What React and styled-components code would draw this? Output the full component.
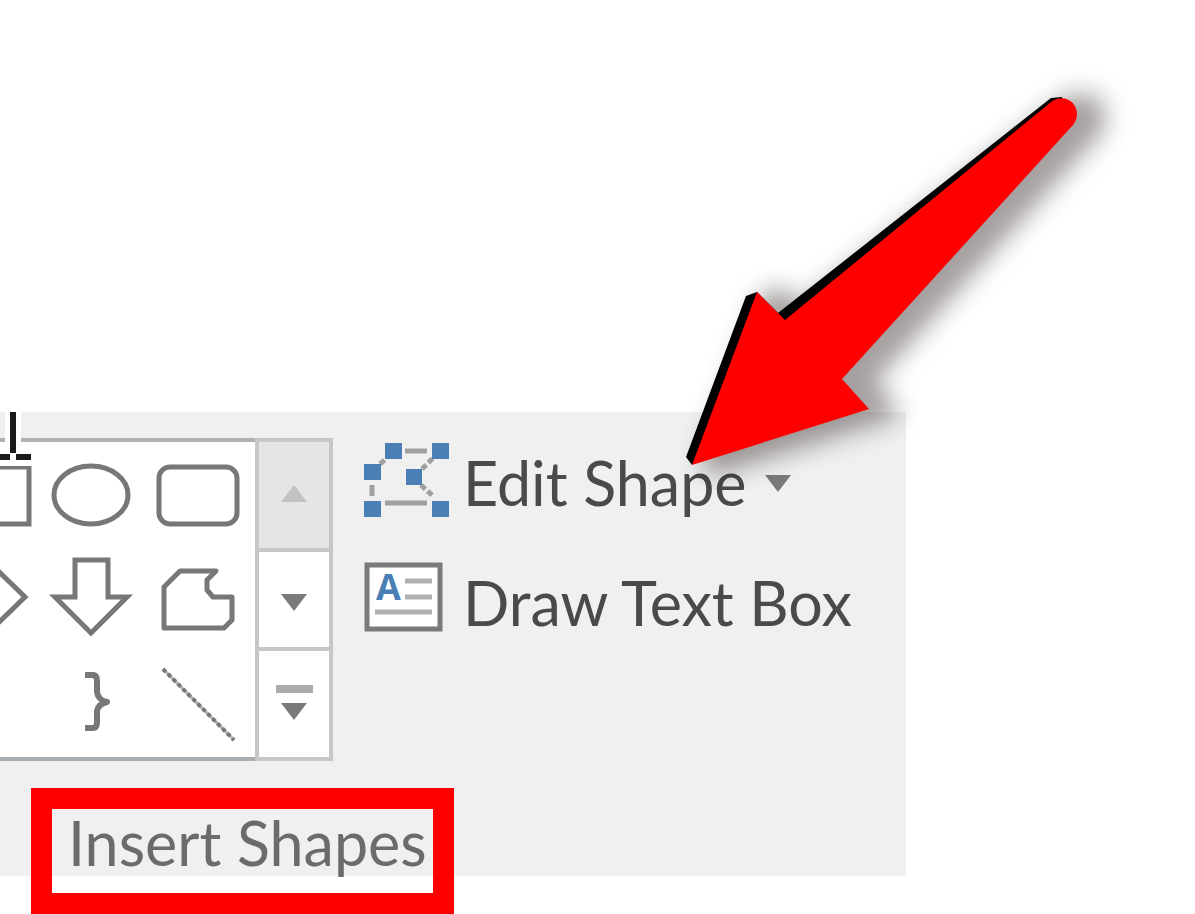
import React from 'react'
import styled, { createGlobalStyle } from 'styled-components'

const GlobalStyle = createGlobalStyle`
  * {
    box-sizing: border-box;
  }

  body {
    margin: 0;
    background: #fff;
    font-family: Lato, 'Open Sans', sans-serif;
  }
`

const Page = styled.main`
  position: relative;
  min-height: 100vh;
  padding-top: 412px;
  overflow: hidden;
`

const Ribbon = styled.section`
  position: relative;
  width: fit-content;
  padding: 26px 54px 0 0;
  background: #f0f0f0;
`

const RibbonBody = styled.div`
  display: flex;
  align-items: flex-start;
  gap: 31px;
`

const Gallery = styled.div`
  display: flex;
`

const ShapeGrid = styled.div`
  display: grid;
  grid-template-columns: repeat(3, 105px);
  grid-auto-rows: 105px;
  justify-content: end;
  width: 255px;
  padding-right: 7px;
  background: #fff;
  border-top: 4px solid #b0b2b2;
  border-bottom: 4px solid #a8adb1;
  overflow: hidden;
`

const ShapeButton = styled.button`
  padding: 0;
  border: 0;
  background: none;

  svg {
    display: block;
    fill: none;
    stroke: #777;
    stroke-width: 5px;
  }
`

const Scroller = styled.div`
  display: grid;
  grid-template-rows: 106px 95px 1fr;
  gap: 4px;
  width: 78px;
  border: 4px solid #c6c8c8;
  background: #c6c8c8;
`

const ScrollButton = styled.button`
  display: flex;
  flex-direction: column;
  align-items: center;
  justify-content: center;
  gap: 10px;
  padding: ${props => props.$down ? '6px 0 0' : '0 0 4px'};
  border: 0;
  color: ${props => props.disabled ? '#c2c2c2' : '#7a7a7a'};
  background: ${props => props.disabled ? '#e5e5e5' : '#fff'};
`

const Caret = styled.span`
  border-left: 13px solid transparent;
  border-right: 13px solid transparent;
  ${props => props.$up ? 'border-bottom' : 'border-top'}: 17px solid currentColor;
`

const MoreBar = styled.span`
  width: 37px;
  height: 8px;
  background: #ababab;
`

const Commands = styled.div`
  display: flex;
  flex-direction: column;
`

const Command = styled.button`
  display: flex;
  align-items: center;
  height: 120px;
  margin-top: ${props => props.$first ? '-15px' : '0'};
  padding: 0;
  border: 0;
  background: none;
  color: #4a4a4a;
  font: 400 61px/72px Lato, 'Open Sans', sans-serif;
  white-space: nowrap;

  svg {
    flex: none;
    margin-right: 14px;
  }

  ${Caret} {
    margin-left: 18px;
    color: #7a7a7a;
  }
`

const GroupLabel = styled.h2`
  margin: 0;
  padding: 49px 0 0 68px;
  color: #6b6b6b;
  font-size: 61px;
  font-weight: 400;
  line-height: 66px;
`

const Highlight = styled.div`
  position: absolute;
  top: 788px;
  left: 31px;
  width: 423px;
  height: 126px;
  border: 21px solid #f00;
`

const Pointer = styled.svg`
  position: absolute;
  top: 60px;
  left: 660px;
  pointer-events: none;
`

const TextCursor = styled.svg`
  position: absolute;
  top: 0;
  left: 0;
`

const shapes = [
  { name: 'Rectangle', art: <rect x="16" y="25" width="80" height="57" /> },
  { name: 'Oval', art: <ellipse cx="53" cy="53" rx="37" ry="29" /> },
  { name: 'Rounded rectangle', art: <rect x="16" y="25" width="78" height="57" rx="11" /> },
  { name: 'Diamond', art: <path d="M53 12 L92 50 L53 88 L14 50 Z" /> },
  { name: 'Down arrow', art: <path d="M37 13 H70 V50 H89 L53 86 L17 50 H37 Z" /> },
  { name: 'Freeform', art: <path d="M21 81 V40 L37 24 H73 L64 33 V43 L70 50 H89 V73 L81 81 Z" strokeLinejoin="round" /> },
  { name: 'Left brace', art: <path d="M60 23 H52 Q48 23 48 29 V41 L42 49 L48 57 V70 Q48 76 52 76 H60" /> },
  { name: 'Right brace', art: <path d="M47 23 H55 Q59 23 59 29 V40 Q60 48 69 50 Q60 52 59 59 V70 Q59 76 55 76 H47" strokeWidth="6" strokeLinejoin="round" /> },
  {
    name: 'Line',
    art: (
      <>
        <path d="M20 17 L91 88" stroke="#b0b0b0" strokeWidth="3" />
        <path d="M20 17 L91 88" strokeWidth="4" strokeDasharray="4 3" />
      </>
    )
  }
]

const EditShapeIcon = () => (
  <svg width="85" height="82" viewBox="364 442 85 82" aria-hidden="true">
    <g stroke="#a0a0a0" strokeWidth="5">
      <path d="M405 451 H427 M385 503 H427 M372 485 V496" />
      <path d="M380 464 L386 459 M422 469 L433 458 M421 485 L433 496" strokeDasharray="6 3" />
    </g>
    <g fill="#4a7fb5">
      <rect x="385" y="443" width="17" height="16" />
      <rect x="432" y="443" width="17" height="16" />
      <rect x="364" y="464" width="17" height="16" />
      <rect x="406" y="469" width="16" height="16" />
      <rect x="364" y="501" width="17" height="16" />
      <rect x="432" y="501" width="17" height="16" />
    </g>
  </svg>
)

const TextBoxIcon = () => (
  <svg width="85" height="82" viewBox="364 562 85 82" aria-hidden="true">
    <rect x="367" y="565" width="73" height="64" fill="#fff" stroke="#7a7a7a" strokeWidth="5" />
    <text x="376" y="600" fill="#4a7fb5" fontFamily="Open Sans" fontSize="36" fontWeight="700">A</text>
    <path d="M405 581 H432 M405 597 H432 M375 612 H432" stroke="#b0b0b0" strokeWidth="5" />
  </svg>
)

const App = () => {
  return (
    <Page>
      <GlobalStyle />
      <Ribbon>
        <RibbonBody>
          <Gallery>
            <ShapeGrid>
              {shapes.map(shape => (
                <ShapeButton key={shape.name} type="button" aria-label={shape.name}>
                  <svg width="105" height="105" viewBox="0 0 105 105">{shape.art}</svg>
                </ShapeButton>
              ))}
            </ShapeGrid>
            <Scroller>
              <ScrollButton type="button" aria-label="Previous row" disabled><Caret $up /></ScrollButton>
              <ScrollButton type="button" aria-label="Next row" $down><Caret /></ScrollButton>
              <ScrollButton type="button" aria-label="More shapes"><MoreBar /><Caret /></ScrollButton>
            </Scroller>
          </Gallery>
          <Commands>
            <Command type="button" $first><EditShapeIcon />Edit Shape<Caret /></Command>
            <Command type="button"><TextBoxIcon />Draw Text Box</Command>
          </Commands>
        </RibbonBody>
        <GroupLabel>Insert Shapes</GroupLabel>
        <TextCursor width="34" height="54" viewBox="0 0 34 54" aria-hidden="true">
          <path d="M5 0 H21 V39 H34 V54 H0 V39 H5 Z" fill="#fff" />
          <path d="M13 0 V41" stroke="#1a1a1a" strokeWidth="6" />
          <path d="M0 45 H10 M16 45 H31" stroke="#1a1a1a" strokeWidth="6" />
        </TextCursor>
      </Ribbon>
      <Highlight />
      <Pointer width="480" height="430" viewBox="660 60 480 430" aria-hidden="true">
        <defs>
          <filter id="shadow" x="-20%" y="-20%" width="140%" height="140%" colorInterpolationFilters="sRGB">
            <feMorphology in="SourceAlpha" operator="dilate" radius="6" />
            <feOffset dx="22" dy="3" />
            <feGaussianBlur stdDeviation="12" result="blur" />
            <feFlood floodColor="#180808" floodOpacity="0.39" />
            <feComposite in2="blur" operator="in" />
            <feMerge>
              <feMergeNode />
              <feMergeNode in="SourceGraphic" />
            </feMerge>
          </filter>
        </defs>
        <g filter="url(#shadow)">
          <path d="M692 465 L686 457 L746 296 L757 292 L778 313 L1051 98 L1062 97 L1064 112 L785 322 Z" fill="#000" />
          <path d="M692 465 L757 292 L785 320 L1051 102 C1064 93 1077 102 1077 114 Q1077 120 1073 125 L842 379 L869 409 Z" fill="#f00" />
        </g>
      </Pointer>
    </Page>
  )
}

export default App
